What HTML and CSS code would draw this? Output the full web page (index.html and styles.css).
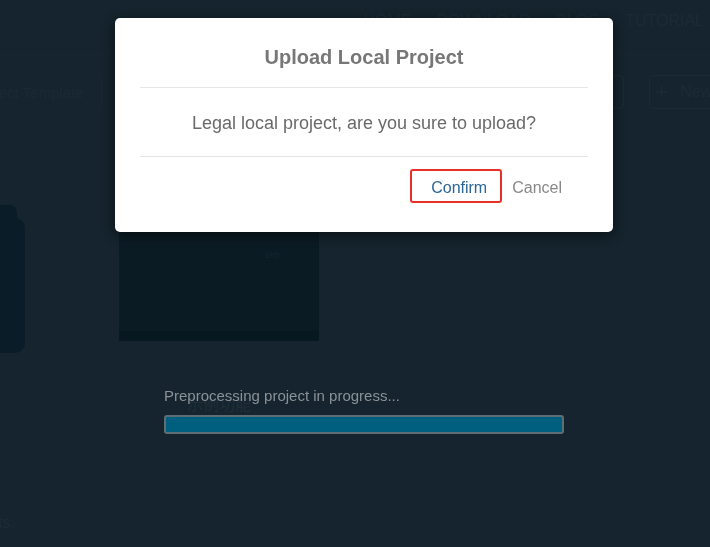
FILE: index.html
```html
<!DOCTYPE html>
<html lang="en">
<head>
    <meta charset="UTF-8">
    <meta name="viewport" content="width=device-width, initial-scale=1.0">
    <title>Upload Local Project</title>
    <link rel="stylesheet" href="styles.css">
</head>
<body>
    <!-- Page behind the mask -->
    <div class="page">
        <header class="topbar">
            <nav class="nav">
                <a class="nav-link">HOME</a>
                <a class="nav-link">DOWNLOAD</a>
                <a class="nav-link">BLOG</a>
                <a class="nav-link">TUTORIAL</a>
            </nav>
        </header>

        <div class="toolbar">
            <div class="tabs">
                <span class="tab">Project Template</span>
                <span class="tab-sep"></span>
            </div>
            <div class="actions">
                <button class="btn-outline">Import</button>
                <button class="btn-outline"><span class="plus">+</span> New</button>
            </div>
        </div>

        <div class="workspace">
            <div class="folder"></div>
            <div class="project-item">
                <div class="project-thumb">
                    <span class="project-size">1kb</span>
                    <span class="project-strip"></span>
                </div>
                <div class="project-name">示例功能</div>
            </div>
        </div>

        <p class="section-label">My Projects:</p>
    </div>

    <!-- Mask with dialog and progress -->
    <div class="mask">
        <div class="modal">
            <div class="modal-header">
                <h2 class="modal-title">Upload Local Project</h2>
            </div>
            <div class="modal-body">
                <p class="modal-text">Legal local project, are you sure to upload?</p>
            </div>
            <div class="modal-footer">
                <button class="modal-btn confirm">Confirm</button>
                <button class="modal-btn cancel">Cancel</button>
            </div>
        </div>

        <div class="progress">
            <div class="progress-text">Preprocessing project in progress...</div>
            <div class="progress-bar"></div>
        </div>
    </div>
</body>
</html>
```

FILE: styles.css
```css
/* Base */
html, body {
    margin: 0;
    height: 100%;
}

body {
    background: #2a485c;
    font-family: "Liberation Sans", Arial, "Noto Sans CJK SC", sans-serif;
    overflow: hidden;
}

button {
    font-family: inherit;
    background: none;
    border: 0;
    padding: 0;
    cursor: pointer;
}

/* Page behind the mask */
.page {
    width: 830px;
    margin-left: -80px;
}

.topbar {
    height: 54px;
    border-bottom: 1px solid #2e4c5e;
}

.nav {
    display: flex;
    justify-content: flex-end;
    gap: 25px;
    padding: 12px 46px 0 0;
}

.nav-link {
    font-size: 16px;
    line-height: 18px;
    color: #36566b;
}

.toolbar {
    display: flex;
    align-items: center;
    height: 34px;
    margin-top: 20px;
}

.tabs {
    display: flex;
    align-items: center;
    padding-left: 52px;
}

.tab {
    font-size: 15px;
    color: #34536a;
}

.tab-sep {
    width: 1px;
    height: 27px;
    margin-left: 18px;
    background: #34546a;
}

.actions {
    display: flex;
    gap: 25px;
    margin-left: auto;
    padding-right: 11px;
}

.btn-outline {
    width: 90px;
    height: 34px;
    border: 1px solid #36566b;
    border-radius: 4px;
    color: #36566b;
    font-size: 16px;
    text-align: left;
    padding-left: 5px;
}

.plus {
    font-size: 22px;
    margin-right: 8px;
    vertical-align: -2px;
}

.workspace {
    display: flex;
    align-items: flex-start;
    gap: 94px;
    margin-top: 81px;
}

.folder {
    position: relative;
    width: 105px;
    height: 135px;
    margin-top: 28px;
    background: #14384e;
    border-radius: 10px;
}

.folder::before {
    content: "";
    position: absolute;
    top: -13px;
    left: 0;
    width: 97px;
    height: 24px;
    background: #14384e;
    border-radius: 8px;
}

.project-item {
    width: 200px;
}

.project-thumb {
    display: flex;
    flex-direction: column;
    height: 151px;
    background: #163648;
}

.project-size {
    flex: 1;
    padding: 60px 40px 0 0;
    text-align: right;
    font-size: 9px;
    color: #2a485c;
}

.project-strip {
    height: 10px;
    background: #103042;
}

.project-name {
    margin-top: 54px;
    font-size: 16px;
    line-height: 20px;
    text-align: center;
    color: #3e5c70;
}

.section-label {
    margin: 98px 0 0;
    padding-left: 7px;
    font-size: 16px;
    line-height: 20px;
    color: #36566b;
}

/* Mask */
.mask {
    position: fixed;
    inset: 0;
    display: flex;
    flex-direction: column;
    align-items: center;
    padding: 18px 0 0 18px;
    background: rgba(0, 0, 0, 0.5);
}

.modal {
    width: 498px;
    background: #fff;
    border-radius: 5px;
    box-shadow: 0 3px 14px rgba(0, 0, 0, 0.55);
}

.modal-header {
    margin: 0 25px;
    padding: 27px 0 18px;
    border-bottom: 1px solid #e6e6e6;
}

.modal-title {
    margin: 0;
    font-size: 20px;
    line-height: 24px;
    font-weight: bold;
    text-align: center;
    color: #777;
}

.modal-body {
    margin: 0 25px;
    padding: 23px 0 21px;
    border-bottom: 1px solid #e6e6e6;
}

.modal-text {
    margin: 0;
    font-size: 18px;
    line-height: 24px;
    text-align: center;
    color: #6a6a6a;
}

.modal-footer {
    display: flex;
    justify-content: flex-end;
    gap: 10px;
    padding: 12px 51px 29px 25px;
}

.modal-btn {
    height: 34px;
    font-size: 16px;
}

.confirm {
    box-sizing: border-box;
    padding: 4px 13px 0 19px;
    line-height: 26px;
    border: 2px solid #e8302a;
    border-radius: 3px;
    color: #2a6595;
}

.cancel {
    line-height: 38px;
    color: #888;
}

/* Progress */
.progress {
    width: 400px;
    margin-top: 155px;
}

.progress-text {
    font-size: 15px;
    line-height: 18px;
    color: #8b9196;
}

.progress-bar {
    box-sizing: border-box;
    height: 19px;
    margin-top: 10px;
    background: #005f7f;
    border: 2px solid #5f6d75;
    border-radius: 3px;
}
```
